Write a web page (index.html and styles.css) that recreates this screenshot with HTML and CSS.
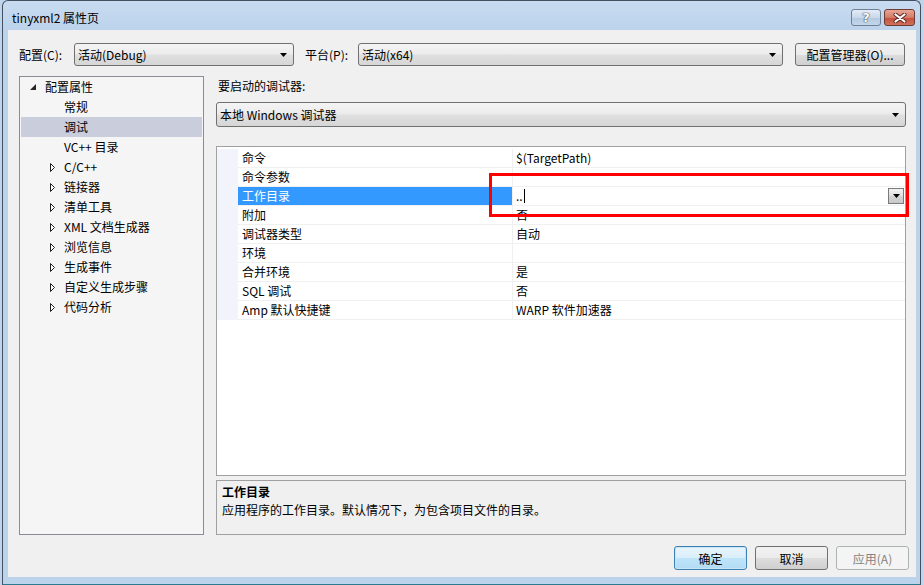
FILE: index.html
```html
<!DOCTYPE html>
<html lang="zh-CN">
<head>
<meta charset="utf-8">
<title>tinyxml2 属性页</title>
<link rel="stylesheet" href="styles.css">
</head>
<body>
<div class="window">
  <div class="titlebar">
    <span class="title">tinyxml2 属性页</span>
    <div class="capbtns">
      <div class="cbtn help">?</div>
      <div class="cbtn close"><svg width="14" height="10" viewBox="0 0 14 10"><path d="M2.5 1.5 L11.5 8.5 M11.5 1.5 L2.5 8.5" stroke="#5a2620" stroke-width="4" stroke-linecap="round"/><path d="M2.5 1.5 L11.5 8.5 M11.5 1.5 L2.5 8.5" stroke="#ffffff" stroke-width="2.2" stroke-linecap="round"/></svg></div>
    </div>
  </div>
  <div class="client">
    <div class="toprow">
      <span class="lbl lbl1">配置(C):</span>
      <div class="combo c1"><span>活动(Debug)</span><svg class="arr" width="7" height="4"><polygon points="0,0 7,0 3.5,4" fill="#000"/></svg></div>
      <span class="lbl lbl2">平台(P):</span>
      <div class="combo c2"><span>活动(x64)</span><svg class="arr" width="7" height="4"><polygon points="0,0 7,0 3.5,4" fill="#000"/></svg></div>
      <div class="btn mgr">配置管理器(O)...</div>
    </div>
    <div class="main">
      <div class="tree">
        <div class="ti top"><span class="exp"><svg width="6" height="6"><polygon points="6,0 6,6 0,6" fill="#262626"/></svg></span>配置属性</div>
        <div class="ti sub"><span class="exp"></span>常规</div>
        <div class="ti sub sel"><span class="exp"></span>调试</div>
        <div class="ti sub"><span class="exp"></span>VC++ 目录</div>
        <div class="ti sub"><span class="exp"><svg width="6" height="9"><polygon points="0.5,0.5 4.5,4.5 0.5,8.5" fill="#fff" stroke="#1e1e1e" stroke-width="1"/></svg></span>C/C++</div>
        <div class="ti sub"><span class="exp"><svg width="6" height="9"><polygon points="0.5,0.5 4.5,4.5 0.5,8.5" fill="#fff" stroke="#1e1e1e" stroke-width="1"/></svg></span>链接器</div>
        <div class="ti sub"><span class="exp"><svg width="6" height="9"><polygon points="0.5,0.5 4.5,4.5 0.5,8.5" fill="#fff" stroke="#1e1e1e" stroke-width="1"/></svg></span>清单工具</div>
        <div class="ti sub"><span class="exp"><svg width="6" height="9"><polygon points="0.5,0.5 4.5,4.5 0.5,8.5" fill="#fff" stroke="#1e1e1e" stroke-width="1"/></svg></span>XML 文档生成器</div>
        <div class="ti sub"><span class="exp"><svg width="6" height="9"><polygon points="0.5,0.5 4.5,4.5 0.5,8.5" fill="#fff" stroke="#1e1e1e" stroke-width="1"/></svg></span>浏览信息</div>
        <div class="ti sub"><span class="exp"><svg width="6" height="9"><polygon points="0.5,0.5 4.5,4.5 0.5,8.5" fill="#fff" stroke="#1e1e1e" stroke-width="1"/></svg></span>生成事件</div>
        <div class="ti sub"><span class="exp"><svg width="6" height="9"><polygon points="0.5,0.5 4.5,4.5 0.5,8.5" fill="#fff" stroke="#1e1e1e" stroke-width="1"/></svg></span>自定义生成步骤</div>
        <div class="ti sub"><span class="exp"><svg width="6" height="9"><polygon points="0.5,0.5 4.5,4.5 0.5,8.5" fill="#fff" stroke="#1e1e1e" stroke-width="1"/></svg></span>代码分析</div>
      </div>
      <div class="right">
        <div class="caption">要启动的调试器:</div>
        <div class="combo big"><span>本地 Windows 调试器</span><svg class="arr" width="7" height="4"><polygon points="0,0 7,0 3.5,4" fill="#000"/></svg></div>
        <div class="grid">
          <div class="row"><div class="m"></div><div class="n">命令</div><div class="v">$(TargetPath)</div></div>
          <div class="row"><div class="m"></div><div class="n">命令参数</div><div class="v"></div></div>
          <div class="row sel"><div class="m"></div><div class="n">工作目录</div><div class="v"><span>..</span><span class="caret"></span><span class="ddbtn"><svg width="7" height="4"><polygon points="0,0 7,0 3.5,4" fill="#000"/></svg></span></div></div>
          <div class="row"><div class="m"></div><div class="n">附加</div><div class="v">否</div></div>
          <div class="row"><div class="m"></div><div class="n">调试器类型</div><div class="v">自动</div></div>
          <div class="row"><div class="m"></div><div class="n">环境</div><div class="v"></div></div>
          <div class="row"><div class="m"></div><div class="n">合并环境</div><div class="v">是</div></div>
          <div class="row"><div class="m"></div><div class="n">SQL 调试</div><div class="v">否</div></div>
          <div class="row"><div class="m"></div><div class="n">Amp 默认快捷键</div><div class="v">WARP 软件加速器</div></div>
          <div class="redbox"></div>
        </div>
        <div class="desc">
          <div class="dtitle">工作目录</div>
          <div class="dtext">应用程序的工作目录。默认情况下，为包含项目文件的目录。</div>
        </div>
      </div>
    </div>
    <div class="buttons">
      <div class="btn ok">确定</div>
      <div class="btn">取消</div>
      <div class="btn disabled">应用(A)</div>
    </div>
  </div>
</div>
</body>
</html>
```
FILE: styles.css
```css
* { box-sizing: border-box; }
html, body { margin: 0; padding: 0; }
body {
  width: 924px;
  height: 585px;
  overflow: hidden;
  background: #bfd5ee;
  font-family: "Noto Sans CJK SC", "Noto Sans", sans-serif;
  font-size: 12px;
  color: #000;
}
.window {
  margin-left: 2px;
  width: 919px;
  height: 585px;
  border: 1px solid #45505e;
  border-bottom-color: #2b7a8e;
  border-radius: 6px 6px 0 0;
  background: linear-gradient(#c8dbf0, #bcd3ec 30px, #bcd3ec);
  padding: 0 4px 7px 5px;
  display: flex;
  flex-direction: column;
}
.titlebar {
  height: 29px;
  display: flex;
  justify-content: space-between;
  align-items: flex-start;
  padding: 8px 1px 0 4px;
}
.title { line-height: 18px; }
.capbtns { display: flex; gap: 3px; margin-top: 0; }
.cbtn {
  height: 17px;
  border-radius: 3px;
  display: flex;
  align-items: center;
  justify-content: center;
}
.help {
  width: 30px;
  border: 1px solid #6f7f94;
  background: linear-gradient(#e4ecf6, #c9d8ea 50%, #b4c8df 51%, #c4d6ea);
  color: #fff;
  font-family: "DejaVu Sans", sans-serif;
  font-weight: bold;
  font-size: 13px;
  line-height: 15px;
  text-shadow: 0 0 1px #33465c, 0 0 1px #33465c, 0 0 1px #33465c;
}
.close {
  width: 31px;
  border: 1px solid #6e3a34;
  background: linear-gradient(#e8a595, #d47b68 50%, #c4503c 51%, #d2705a);
}
.client {
  width: 908px;
  height: 547px;
  background: #f0f0f0;
  display: flex;
  flex-direction: column;
}
.toprow {
  display: flex;
  align-items: center;
  padding: 13px 11px 0 11px;
  height: 36px;
}
.lbl { line-height: 23px; }
.lbl1 { width: 55px; }
.lbl2 { width: 53px; margin-left: 11px; }
.combo {
  display: flex;
  align-items: center;
  justify-content: space-between;
  border: 1px solid #707070;
  border-radius: 3px;
  background: linear-gradient(#f4f4f4, #ececec 45%, #dfdfdf 55%, #d6d6d6);
  padding: 0 6px 0 3px;
}
.c1 { width: 220px; height: 23px; }
.c2 { width: 425px; height: 23px; }
.big { height: 25px; }
.arr { flex: none; }
.btn {
  display: flex;
  align-items: center;
  justify-content: center;
  width: 73px;
  height: 24px;
  border: 1px solid #707070;
  border-radius: 3px;
  background: linear-gradient(#f2f2f2, #ebebeb 50%, #dddddd 51%, #cfcfcf);
}
.mgr { width: 110px; height: 23px; margin-left: 12px; }
.main {
  display: flex;
  margin-top: 10px;
  padding-left: 11px;
}
.tree {
  width: 185px;
  height: 459px;
  border: 1px solid #8a8d93;
  background: #f5f5f5;
  padding: 0 1px;
}
.ti {
  height: 20px;
  display: flex;
  align-items: center;
  white-space: nowrap;
  line-height: 20px;
}
.ti.top { padding-left: 9px; }
.ti.top .exp { width: 15px; }
.ti.sub { padding-left: 29px; }
.ti.sub .exp { width: 14px; }
.exp { display: flex; align-items: center; flex: none; height: 20px; }
.ti.sel { background: #cacddb; }
.right {
  width: 690px;
  margin-left: 12px;
  display: flex;
  flex-direction: column;
}
.caption { height: 26px; line-height: 19px; padding-left: 2px; }
.grid {
  position: relative;
  margin-top: 19px;
  height: 330px;
  border: 1px solid #a0a0a0;
  background: #fff;
  padding-top: 2px;
}
.row { display: flex; height: 19px; }
.m { width: 21px; flex: none; background: #f1f4fa; }
.n {
  width: 275px;
  flex: none;
  border-right: 1px solid #f0f0f0;
  border-bottom: 1px solid #f0f0f0;
  padding-left: 4px;
  line-height: 18px;
  white-space: nowrap;
}
.v {
  flex: 1;
  border-bottom: 1px solid #f0f0f0;
  padding-left: 3px;
  line-height: 18px;
  display: flex;
  align-items: center;
  white-space: nowrap;
}
.row.sel .n { background: #3399ff; color: #fff; border-bottom-color: #f0f0f0; }
.caret {
  width: 1px;
  height: 14px;
  background: #000;
  margin-left: 1px;
}
.ddbtn {
  margin-left: auto;
  margin-right: 1px;
  width: 16px;
  height: 16px;
  border: 1px solid #7a7a7a;
  background: linear-gradient(#f2f2f2, #e0e0e0 50%, #d4d4d4 51%, #c8c8c8);
  display: flex;
  align-items: center;
  justify-content: center;
}
.redbox {
  position: absolute;
  left: 272px;
  top: 26px;
  width: 420px;
  height: 44px;
  border: 3px solid #ff0000;
}
.desc {
  margin-top: 4px;
  height: 55px;
  border: 1px solid #a0a0a0;
  background: #f0f0f0;
  padding: 2px 0 0 5px;
  line-height: 18px;
}
.dtitle { font-weight: bold; }
.buttons {
  display: flex;
  justify-content: flex-end;
  gap: 8px;
  padding-right: 7px;
  margin-top: 11px;
}
.btn.ok {
  border-color: #3c7fb1;
  background: linear-gradient(#e9f5fc, #d8eefb 50%, #bee4f9 51%, #b2dcf4);
  box-shadow: inset 0 0 0 1px #c8e6f8;
}
.btn.disabled {
  border-color: #adb2b5;
  background: #f4f4f4;
  color: #838383;
}
```
